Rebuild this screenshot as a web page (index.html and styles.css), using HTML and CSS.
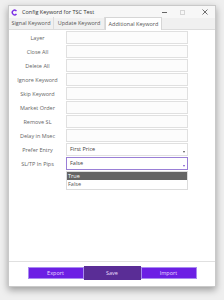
FILE: index.html
```html
<!DOCTYPE html>
<html lang="en">
<head>
  <meta charset="UTF-8" />
  <title>Config Keyword for TSC Test</title>
  <link rel="stylesheet" href="styles.css">
</head>
<body>

  <div class="window">
    <div class="titlebar">
      <svg class="app-icon" width="7" height="7" viewBox="0 0 10 10">
        <path d="M8.6 2.6A4.2 4.2 0 1 0 8.6 7.4L6.9 6.3A2.2 2.2 0 1 1 6.9 3.7Z" fill="#7b2fe6"/>
      </svg>
      <span class="title">Config Keyword for TSC Test</span>
      <div class="controls">
        <span class="ctrl min"></span>
        <span class="ctrl max"></span>
        <svg class="ctrl close" width="6" height="6" viewBox="0 0 6 6">
          <path d="M0.5 0.5L5.5 5.5M5.5 0.5L0.5 5.5" stroke="#333" stroke-width="0.7"/>
        </svg>
      </div>
    </div>

    <div class="tabs">
      <div class="tab">Signal Keyword</div>
      <div class="tab">Update Keyword</div>
      <div class="tab active">Additional Keyword</div>
    </div>

    <div class="form">
      <div class="row"><label>Layer</label><div class="field"></div></div>
      <div class="row"><label>Close All</label><div class="field"></div></div>
      <div class="row"><label>Delete All</label><div class="field"></div></div>
      <div class="row"><label>Ignore Keyword</label><div class="field"></div></div>
      <div class="row"><label>Skip Keyword</label><div class="field"></div></div>
      <div class="row"><label>Market Order</label><div class="field"></div></div>
      <div class="row"><label>Remove SL</label><div class="field"></div></div>
      <div class="row"><label>Delay in Msec</label><div class="field"></div></div>
      <div class="row">
        <label>Prefer Entry</label>
        <div class="field select"><span>First Price</span><span class="arrow"></span></div>
      </div>
      <div class="row">
        <label>SL/TP In Pips</label>
        <div class="field select focused"><span>False</span><span class="arrow"></span></div>
      </div>
      <div class="options">
        <div class="option selected">True</div>
        <div class="option">False</div>
      </div>
    </div>

    <div class="footer">
      <button class="btn">Export</button>
      <button class="btn save">Save</button>
      <button class="btn">Import</button>
    </div>
  </div>

</body>
</html>
```

FILE: styles.css
```css
* {
  box-sizing: border-box;
  margin: 0;
  padding: 0;
}

body {
  font-family: 'Open Sans', 'Noto Sans', sans-serif;
  background: #efefef;
  width: 224px;
  height: 300px;
  overflow: hidden;
  padding: 5px 8px 0 8px;
}

.window {
  width: 208px;
  height: 282px;
  background: #ffffff;
  border: 1px solid #c9c9c9;
  box-shadow: 0 3px 7px rgba(0, 0, 0, 0.35);
  display: flex;
  flex-direction: column;
}

.titlebar {
  height: 12px;
  display: flex;
  align-items: center;
  padding-left: 2px;
  background: #f7f7f7;
}

.app-icon {
  margin-right: 4px;
}

.title {
  font-size: 5.5px;
  color: #333;
  white-space: nowrap;
}

.controls {
  margin-left: auto;
  display: flex;
  align-items: center;
}

.ctrl.min {
  width: 5px;
  height: 0.7px;
  background: #666;
  margin-right: 13px;
}

.ctrl.max {
  width: 5px;
  height: 5px;
  border: 0.6px solid #d6d6d6;
  margin-right: 17px;
}

.ctrl.close {
  margin-right: 7px;
}

.tabs {
  height: 12px;
  display: flex;
  align-items: flex-end;
  background: #f0f0f0;
  border-bottom: 1px solid #dcdcdc;
}

.tab {
  height: 12px;
  display: flex;
  align-items: center;
  justify-content: center;
  font-size: 5.5px;
  color: #555;
  white-space: nowrap;
  border-right: 1px solid #dcdcdc;
}

.tab:nth-child(1) { width: 45px; }
.tab:nth-child(2) { width: 51px; }

.tab.active {
  width: 57px;
  height: 13px;
  background: #ffffff;
  border: 1px solid #d6d6d6;
  border-bottom: none;
  margin-bottom: -1px;
}

.form {
  flex: 1;
  padding-top: 1px;
  display: flex;
  flex-direction: column;
  gap: 1px;
}

.row {
  display: flex;
  height: 13px;
}

.row label {
  width: 57px;
  font-size: 5.5px;
  color: #666;
  white-space: nowrap;
  display: flex;
  align-items: center;
  justify-content: center;
}

.field {
  width: 122px;
  height: 13px;
  border: 1px solid #e0e0e0;
  background: #fcfcfc;
}

.select {
  display: flex;
  justify-content: space-between;
  padding: 0 2px 2px 3px;
  font-size: 5.5px;
  color: #444;
  background: #ffffff;
}

.select span:first-child {
  align-self: center;
  padding-top: 1px;
}

.arrow {
  align-self: flex-end;
  width: 0;
  height: 0;
  border-left: 1.5px solid transparent;
  border-right: 1.5px solid transparent;
  border-top: 2px solid #555;
}

.select.focused {
  border-color: #9a7fd6;
}

.select.focused .arrow {
  border-top-color: #7b52d0;
}

.options {
  margin-left: 57px;
  width: 122px;
  height: 19px;
  border: 1px solid #dcdcdc;
  background: #ffffff;
}

.option {
  height: 8px;
  font-size: 5.5px;
  color: #555;
  line-height: 8px;
  padding-left: 1px;
}

.option.selected {
  background: #646464;
  color: #ffffff;
}

.footer {
  height: 25px;
  border-top: 1px solid #e0e0e0;
  display: flex;
  justify-content: center;
  align-items: center;
  padding-bottom: 2px;
}

.btn {
  font-family: inherit;
  font-size: 5.5px;
  color: #e9ddff;
  background: #6c1fe4;
  border: 1px solid #a98af0;
  height: 12px;
  width: 56px;
  cursor: pointer;
}

.btn.save {
  background: #5a2d96;
  border-color: #5a2d96;
  height: 14px;
  width: 57px;
}
```
